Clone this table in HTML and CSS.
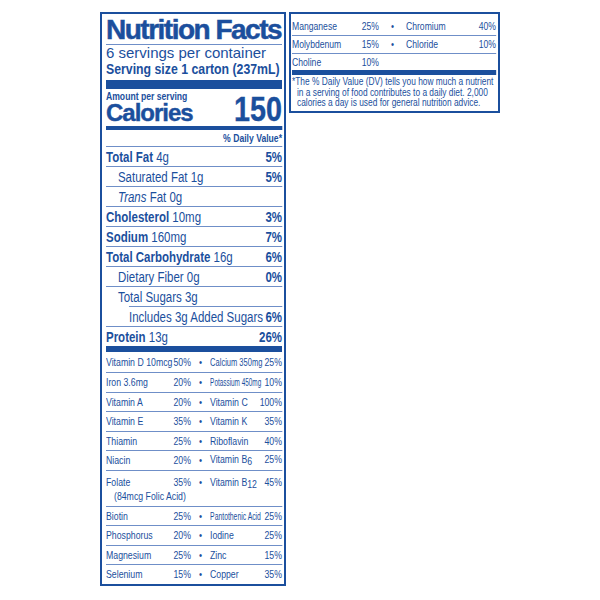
FILE: index.html
```html
<!DOCTYPE html>
<html lang="en">
<head>
<meta charset="utf-8">
<title>Nutrition Facts</title>
<link rel="stylesheet" href="styles.css">
</head>
<body>
<div class="page">
  <section class="label">
    <h1 class="title">Nutrition Facts</h1>
    <div class="servings">6 servings per container</div>
    <div class="cond">
      <div class="serving-size">Serving size 1 carton (237mL)</div>
    </div>
    <div class="bar bar-thick"></div>
    <div class="cond">
      <div class="calories-row">
        <div class="cal-left">
          <div class="amount">Amount per serving</div>
          <div class="cal-label">Calories</div>
        </div>
        <div class="cal-value">150</div>
      </div>
      <div class="bar bar-mid"></div>
      <div class="dv-head">% Daily Value*</div>
      <div class="nrow"><span><b>Total Fat</b> 4g</span><b>5%</b></div>
      <div class="nrow ind1"><span>Saturated Fat 1g</span><b>5%</b></div>
      <div class="nrow ind1"><span><i>Trans</i> Fat 0g</span></div>
      <div class="nrow"><span><b>Cholesterol</b> 10mg</span><b>3%</b></div>
      <div class="nrow"><span><b>Sodium</b> 160mg</span><b>7%</b></div>
      <div class="nrow"><span><b>Total Carbohydrate</b> 16g</span><b>6%</b></div>
      <div class="nrow ind1"><span>Dietary Fiber 0g</span><b>0%</b></div>
      <div class="nrow ind1"><span>Total Sugars 3g</span></div>
      <div class="nrow ind2"><span>Includes 3g Added Sugars</span><b>6%</b></div>
      <div class="nrow"><span><b>Protein</b> 13g</span><b>26%</b></div>
    </div>
    <div class="bar bar-prot"></div>

    <div class="cond-v">
      <div class="vrow first"><div class="vc"><span>Vitamin D 10mcg</span><span>50%</span></div><span class="dot">•</span><div class="vc"><span class="sq w-cal"><span>Calcium 350mg</span></span><span>25%</span></div></div>
      <div class="vrow"><div class="vc"><span>Iron 3.6mg</span><span>20%</span></div><span class="dot">•</span><div class="vc"><span class="sq w-pot"><span>Potassium 450mg</span></span><span>10%</span></div></div>
      <div class="vrow"><div class="vc"><span>Vitamin A</span><span>20%</span></div><span class="dot">•</span><div class="vc"><span>Vitamin C</span><span>100%</span></div></div>
      <div class="vrow"><div class="vc"><span>Vitamin E</span><span>35%</span></div><span class="dot">•</span><div class="vc"><span>Vitamin K</span><span>35%</span></div></div>
      <div class="vrow"><div class="vc"><span>Thiamin</span><span>25%</span></div><span class="dot">•</span><div class="vc"><span>Riboflavin</span><span>40%</span></div></div>
      <div class="vrow"><div class="vc"><span>Niacin</span><span>20%</span></div><span class="dot">•</span><div class="vc"><span>Vitamin B<span class="sub">6</span></span><span>25%</span></div></div>
      <div class="vrow folate"><div class="vc"><span class="two-line">Folate<span class="subline">(84mcg Folic Acid)</span></span><span>35%</span></div><span class="dot">•</span><div class="vc"><span>Vitamin B<span class="sub">12</span></span><span>45%</span></div></div>
      <div class="vrow"><div class="vc"><span>Biotin</span><span>25%</span></div><span class="dot">•</span><div class="vc"><span class="sq w-pan"><span>Pantothenic Acid</span></span><span>25%</span></div></div>
      <div class="vrow"><div class="vc"><span>Phosphorus</span><span>20%</span></div><span class="dot">•</span><div class="vc"><span>Iodine</span><span>25%</span></div></div>
      <div class="vrow"><div class="vc"><span>Magnesium</span><span>25%</span></div><span class="dot">•</span><div class="vc"><span>Zinc</span><span>15%</span></div></div>
      <div class="vrow"><div class="vc"><span>Selenium</span><span>15%</span></div><span class="dot">•</span><div class="vc"><span>Copper</span><span>35%</span></div></div>
    </div>
  </section>

  <section class="side">
    <div class="cond">
      <div class="mrow"><div class="vc"><span>Manganese</span><span>25%</span></div><span class="dot">•</span><div class="vc"><span>Chromium</span><span>40%</span></div></div>
      <div class="mrow"><div class="vc"><span>Molybdenum</span><span>15%</span></div><span class="dot">•</span><div class="vc"><span>Chloride</span><span>10%</span></div></div>
      <div class="mrow last"><div class="vc"><span>Choline</span><span>10%</span></div></div>
      <div class="bar bar-side"></div>
      <p class="foot">*The % Daily Value (DV) tells you how much a nutrient in a serving of food contributes to a daily diet. 2,000 calories a day is used for general nutrition advice.</p>
    </div>
  </section>
</div>
</body>
</html>
```

FILE: styles.css
```css
* {
  box-sizing: border-box;
  margin: 0;
  padding: 0;
}

body {
  background: #ffffff;
  color: #1b4f9d;
  font-family: "Liberation Sans", Arial, sans-serif;
}

.page {
  display: flex;
  align-items: flex-start;
  gap: 3px;
  padding: 12px 0 0 100px;
}

/* condensed type: the label face is a narrow grotesque */
.cond {
  width: calc(100% / 0.82);
  transform: scaleX(0.82);
  transform-origin: 0 0;
}

.cond-v {
  width: calc(100% / 0.76);
  transform: scaleX(0.76);
  transform-origin: 0 0;
}

.label {
  width: 186px;
  border: 2px solid #1b4f9d;
  padding: 0 2px 0 4px;
}

.title {
  font-weight: 700;
  font-size: 28px;
  letter-spacing: -1.5px;
  line-height: 29px;
  padding-top: 1px;
  border-bottom: 1px solid #6f8fc8;
  white-space: nowrap;
  -webkit-text-stroke: 0.5px #1b4f9d;
}

.servings {
  font-size: 15px;
  line-height: 16px;
  white-space: nowrap;
}

.serving-size {
  font-weight: 700;
  font-size: 15px;
  line-height: 16px;
  white-space: nowrap;
}

.bar {
  background: #1b4f9d;
}

.bar-thick {
  height: 9px;
  margin-top: 3px;
}

.calories-row {
  display: flex;
  justify-content: space-between;
  align-items: last baseline;
}

.amount {
  font-weight: 700;
  font-size: 10.5px;
  line-height: 11px;
  padding-top: 2px;
  white-space: nowrap;
}

.cal-label {
  font-weight: 700;
  font-size: 24px;
  letter-spacing: -1px;
  line-height: 22px;
  transform: scaleX(1.2195);
  transform-origin: 0 50%;
  -webkit-text-stroke: 0.4px #1b4f9d;
}

.cal-value {
  font-weight: 700;
  font-size: 35px;
  line-height: 30px;
  -webkit-text-stroke: 0.4px #1b4f9d;
}

.bar-mid {
  height: 4px;
  margin-top: 2px;
}

.dv-head {
  font-weight: 700;
  font-size: 10.5px;
  line-height: 16px;
  text-align: right;
}

.nrow {
  display: flex;
  justify-content: space-between;
  border-top: 1px solid #6f8fc8;
  height: 20px;
  padding-top: 1px;
  font-size: 14px;
  line-height: 19px;
  white-space: nowrap;
}

.nrow b {
  font-weight: 700;
}

.nrow i {
  font-style: italic;
}

.ind1 {
  padding-left: 14.6px;
}

.ind2 {
  margin-left: 28px;
}

.bar-prot {
  height: 6px;
}

.vrow {
  display: grid;
  grid-template-columns: 111.8px 25px 1fr;
  align-items: center;
  border-top: 1px solid #6f8fc8;
  height: 19.5px;
  font-size: 11.5px;
  line-height: 14px;
  white-space: nowrap;
}

.vrow.first {
  border-top: none;
  height: 20px;
}

.vrow.folate {
  height: 36.2px;
  align-items: start;
  padding-top: 4.5px;
}

.vc {
  display: flex;
  justify-content: space-between;
}

.dot {
  text-align: center;
}

.sub {
  vertical-align: -2px;
}

.two-line {
  display: block;
}

.subline {
  display: block;
  width: 0;
  padding-left: 10.5px;
}

.sq {
  display: inline-block;
}

.sq > span {
  display: inline-block;
  transform-origin: 0 50%;
}

.w-cal {
  width: 68.4px;
}

.w-cal > span {
  transform: scaleX(0.86);
}

.w-pot {
  width: 67.1px;
}

.w-pot > span {
  transform: scaleX(0.73);
}

.w-pan {
  width: 67.1px;
}

.w-pan > span {
  transform: scaleX(0.78);
}

.side {
  width: 211px;
  border: 2px solid #1b4f9d;
  padding: 4px 2px 0 1px;
}

.mrow {
  display: grid;
  grid-template-columns: 106.1px 32.9px 1fr;
  border-bottom: 1px solid #6f8fc8;
  height: 18px;
  font-size: 10.5px;
  line-height: 17px;
  white-space: nowrap;
}

.mrow.last {
  border-bottom: none;
  height: 16px;
}

.bar-side {
  height: 5px;
}

.foot {
  font-size: 10.2px;
  line-height: 10.5px;
  padding: 2px 0 2px 6.1px;
  text-indent: -6.1px;
}
```
